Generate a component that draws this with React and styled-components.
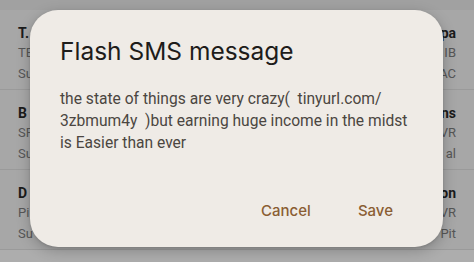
import React from 'react';
import styled, { createGlobalStyle } from 'styled-components';

const GlobalStyle = createGlobalStyle`
  html, body {
    margin: 0;
    padding: 0;
    background: #a7a7a7;
  }
  * {
    box-sizing: border-box;
  }
`;

const Screen = styled.div`
  position: relative;
  width: 474px;
  height: 262px;
  overflow: hidden;
  background: #adadad;
  font-family: Roboto, "Noto Sans", sans-serif;
`;

const TopStrip = styled.div`
  height: 10px;
  background: #a1a1a1;
`;

const List = styled.div`
  display: flex;
  flex-direction: column;
  background: #a7a7a7;
`;

const Row = styled.div`
  display: flex;
  justify-content: space-between;
  height: 80px;
  padding: 13px 18px 0;
  border-bottom: 1px solid #9a9a9a;
`;

const Column = styled.div`
  display: flex;
  flex-direction: column;
  align-items: ${p => (p.$end ? 'flex-end' : 'flex-start')};
  white-space: nowrap;
`;

const RowTitle = styled.div`
  font-size: 14px;
  line-height: 20px;
  font-weight: 700;
  color: #1b1b1b;
`;

const RowLine = styled.div`
  font-size: 13px;
  line-height: 20.5px;
  color: #565656;
`;

const Dialog = styled.div`
  position: absolute;
  left: 30px;
  top: 10px;
  width: 413px;
  height: 237px;
  border-radius: 28px;
  background: #efebe6;
  box-shadow: 0 4px 14px rgba(0, 0, 0, 0.22), 0 1px 3px rgba(0, 0, 0, 0.12);
  display: flex;
  flex-direction: column;
  padding: 25px 24px 26px 30px;
`;

const Title = styled.h2`
  margin: 0;
  font-family: Inter, Roboto, sans-serif;
  font-size: 24.5px;
  line-height: 32px;
  font-weight: 400;
  color: #1e1c1a;
`;

const Body = styled.p`
  margin: 21px 0 0;
  font-size: 15.6px;
  line-height: 22px;
  color: #4b4641;
`;

const Actions = styled.div`
  margin-top: auto;
  display: flex;
  justify-content: flex-end;
  gap: 23px;
  padding-right: 14px;
`;

const TextButton = styled.button`
  border: none;
  background: none;
  padding: 0 12px;
  font-family: Inter, Roboto, sans-serif;
  font-size: 15px;
  line-height: 20px;
  font-weight: 500;
  color: #8a5d33;
  cursor: pointer;
`;

const rows = [
  { left: ['T.', 'TEL', 'Sun'], right: ['pa', 'IB', 'AC'] },
  { left: ['B', 'SF', 'Su'], right: ['ns', 'VR', 'al'] },
  { left: ['D', 'Pi', 'Su'], right: ['on', 'VR', 'Pit'] },
];

export default function App() {
  return (
    <>
      <GlobalStyle />
      <Screen>
        <TopStrip />
        <List>
          {rows.map((row, i) => (
            <Row key={i}>
              <Column>
                <RowTitle>{row.left[0]}</RowTitle>
                <RowLine>{row.left[1]}</RowLine>
                <RowLine>{row.left[2]}</RowLine>
              </Column>
              <Column $end>
                <RowTitle>{row.right[0]}</RowTitle>
                <RowLine>{row.right[1]}</RowLine>
                <RowLine>{row.right[2]}</RowLine>
              </Column>
            </Row>
          ))}
        </List>

        <Dialog role="dialog">
          <Title>Flash SMS message</Title>
          <Body>
            the state of things are very crazy(&nbsp; tinyurl.com/ 3zbmum4y&nbsp; )but earning huge income in the midst is Easier than ever
          </Body>
          <Actions>
            <TextButton>Cancel</TextButton>
            <TextButton>Save</TextButton>
          </Actions>
        </Dialog>
      </Screen>
    </>
  );
}
